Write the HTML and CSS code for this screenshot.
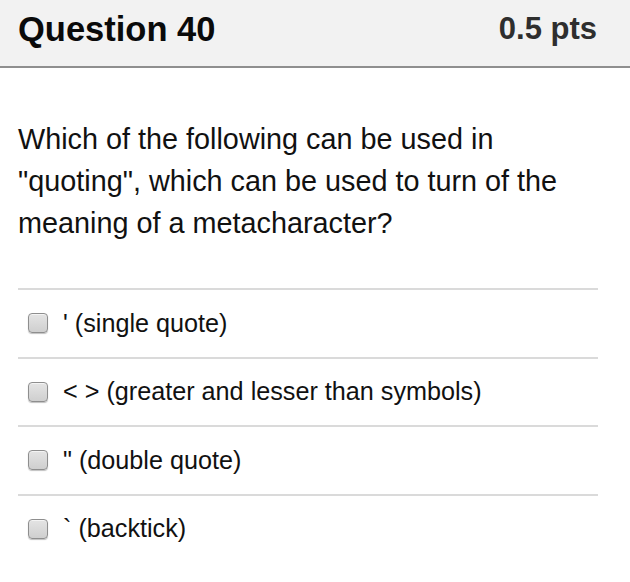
FILE: index.html
```html
<!DOCTYPE html>
<html>
<head>
<meta charset="utf-8">
<link rel="stylesheet" href="styles.css">
</head>
<body>
<div class="quiz">
  <header class="q-header">
    <h2 class="q-title">Question 40</h2>
    <span class="q-points">0.5 pts</span>
  </header>
  <p class="q-text">Which of the following can be used in "quoting", which can be used to turn of the meaning of a metacharacter?</p>
  <ul class="answers">
    <li class="answer"><span class="box"></span><span class="label">' (single quote)</span></li>
    <li class="answer"><span class="box"></span><span class="label">&lt; &gt; (greater and lesser than symbols)</span></li>
    <li class="answer"><span class="box"></span><span class="label">" (double quote)</span></li>
    <li class="answer"><span class="box"></span><span class="label">` (backtick)</span></li>
  </ul>
</div>
</body>
</html>
```

FILE: styles.css
```css
html, body {
  margin: 0;
  padding: 0;
  background: #ffffff;
}
body {
  font-family: "Liberation Sans", Arial, sans-serif;
  color: #111;
  width: 630px;
  height: 582px;
  overflow: hidden;
}
.q-header {
  display: flex;
  align-items: center;
  justify-content: space-between;
  height: 68px;
  box-sizing: border-box;
  padding: 0 33px 8px 18px;
  background: #f2f2f2;
  border-bottom: 2px solid #8f8f8f;
}
.q-title {
  margin: 0;
  font-size: 34.5px;
  font-weight: bold;
  color: #0a0a0a;
}
.q-points {
  font-size: 31px;
  font-weight: bold;
  color: #2e2e2e;
}
.q-text {
  margin: 50px 32px 0 18px;
  font-size: 28.8px;
  line-height: 42px;
  color: #111;
}
.answers {
  list-style: none;
  margin: 44px 32px 0 18px;
  padding: 0;
}
.answer {
  display: flex;
  align-items: center;
  height: 68.5px;
  box-sizing: border-box;
  border-top: 2px solid #dadada;
  padding: 0 0 0 10px;
  font-size: 25.2px;
  color: #111;
}
.box {
  width: 18px;
  height: 18px;
  border: 1px solid #8e8e8e;
  border-radius: 4px;
  background: linear-gradient(#e4e4e4, #cfcfcf);
  box-shadow: 0 1px 1px rgba(0,0,0,0.25), inset 0 1px 0 rgba(255,255,255,0.6);
  margin-right: 15px;
  flex: none;
}
```
